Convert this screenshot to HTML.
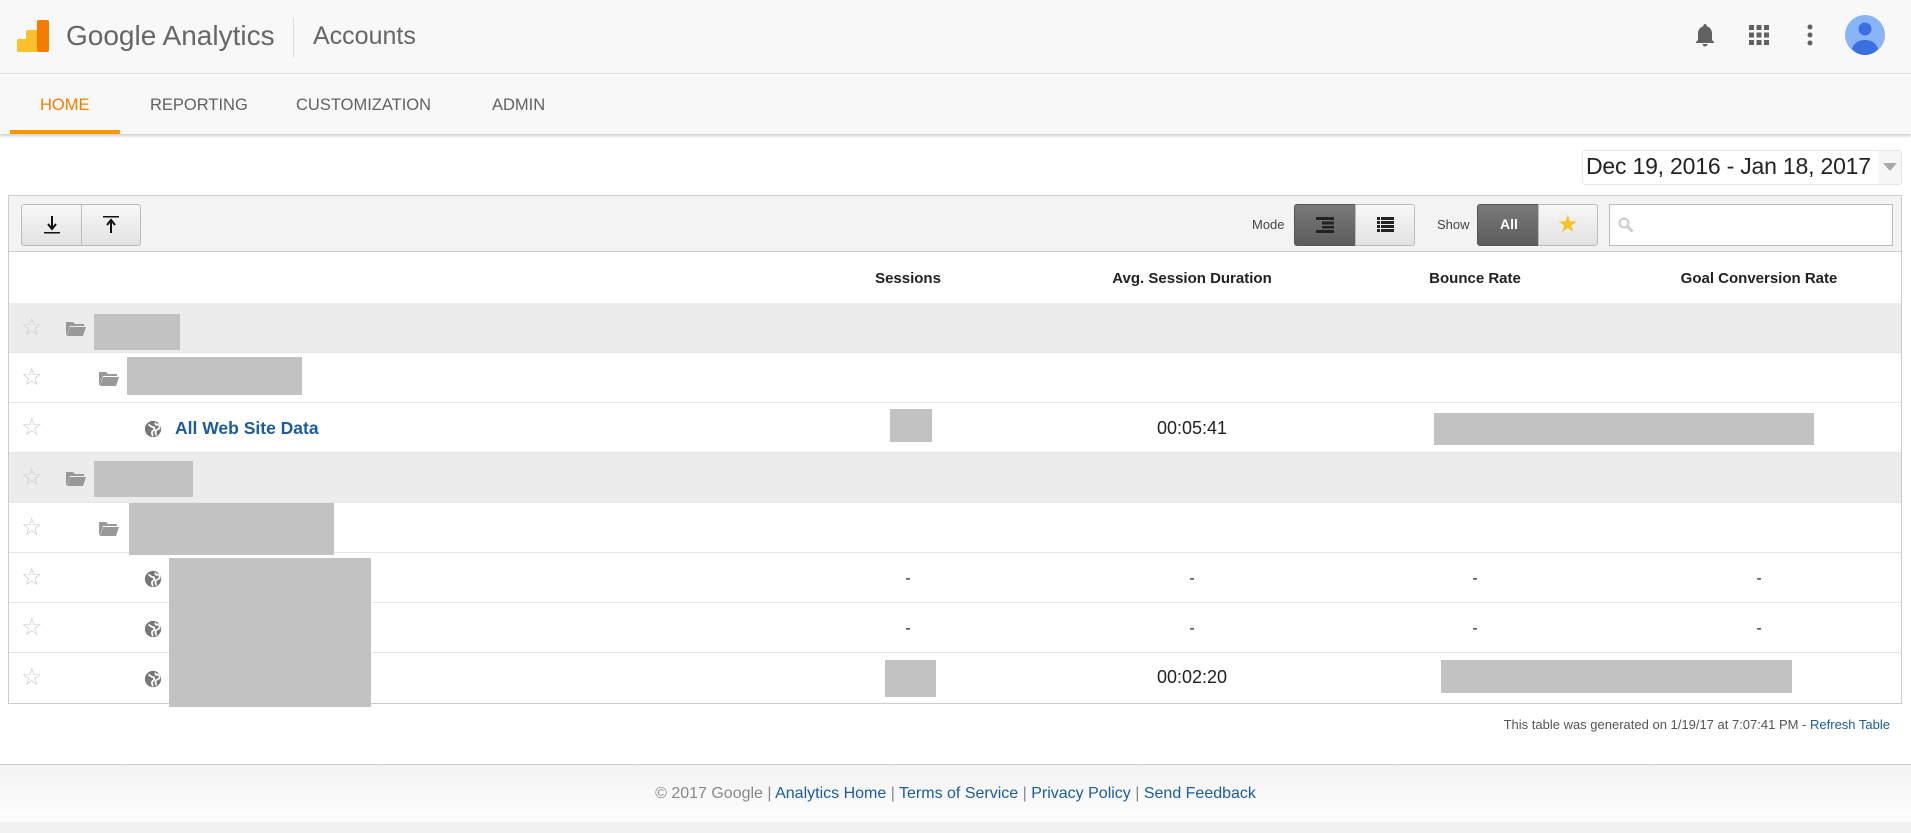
<!DOCTYPE html>
<html><head><meta charset="utf-8"><style>
*{margin:0;padding:0;box-sizing:border-box}
body{width:1911px;height:833px;overflow:hidden;background:#fff;font-family:"Liberation Sans",Arial,sans-serif;position:relative;color:#222}
.a{position:absolute}
.hdr{left:0;top:0;width:1911px;height:74px;background:#f8f8f8;border-bottom:1px solid #e0e0e0}
.nav{left:0;top:75px;width:1911px;height:59px;background:#f8f8f8;box-shadow:0 2px 3px rgba(0,0,0,.2)}
.nav span{position:absolute;top:21px;font-size:16.5px;color:#616161}
.tbl{left:8px;top:195px;width:1894px;height:509px;border:1px solid #ccc;border-top:1px solid #ccc}
.tb{left:9px;top:196px;width:1892px;height:56px;background:#f3f3f3;border-bottom:1px solid #ccc}
.btn{position:absolute;top:8px;height:42px;border:1px solid #bbb;background:linear-gradient(#f7f7f7,#e2e2e2)}
.row{position:absolute;left:9px;width:1892px;height:50px;border-bottom:1px solid #e6e6e6}
.g{background:#ececec}
.blk{position:absolute;background:#c2c2c2}
.th{position:absolute;top:270px;font-size:15px;font-weight:bold;transform:translateX(-50%);color:#222;white-space:nowrap}
.c{position:absolute;transform:translateX(-50%);font-size:18px}
.st{position:absolute;left:12px;top:13px;font-size:24px;color:#ccc;line-height:1}
</style></head><body>
<div class="a hdr"></div>
<svg class="a" style="left:17px;top:20px" width="33" height="32" viewBox="0 0 33 32"><rect x="0" y="19" width="12" height="13" rx="2" fill="#fbc02d"/><rect x="9" y="10" width="12" height="22" rx="2" fill="#fbc02d"/><rect x="20" y="0" width="12" height="32" rx="2" fill="#f57c00"/></svg>
<div class="a" style="left:66px;top:20px;font-size:28px;color:#666">Google Analytics</div>
<div class="a" style="left:293px;top:18px;width:1px;height:40px;background:#ddd"></div>
<div class="a" style="left:313px;top:22px;font-size:25px;color:#666">Accounts</div>
<svg class="a" style="left:1694px;top:22px" width="22" height="26" viewBox="0 0 22 26"><path d="M11 2c-1 0-1.6.7-1.6 1.5v.8C6 5.1 4 8 4 11.5V18l-2 2v1h18v-1l-2-2v-6.5C18 8 16 5.1 12.6 4.3v-.8C12.6 2.7 12 2 11 2zM8.5 22a2.5 2.5 0 005 0z" fill="#616161"/></svg>
<svg class="a" style="left:1749px;top:25px" width="20" height="20" viewBox="0 0 20 20" fill="#616161"><rect x="0" y="0" width="5" height="5"/><rect x="7.5" y="0" width="5" height="5"/><rect x="15" y="0" width="5" height="5"/><rect x="0" y="7.5" width="5" height="5"/><rect x="7.5" y="7.5" width="5" height="5"/><rect x="15" y="7.5" width="5" height="5"/><rect x="0" y="15" width="5" height="5"/><rect x="7.5" y="15" width="5" height="5"/><rect x="15" y="15" width="5" height="5"/></svg>
<svg class="a" style="left:1806px;top:24px" width="8" height="22" viewBox="0 0 8 22" fill="#616161"><circle cx="4" cy="3" r="2.5"/><circle cx="4" cy="11" r="2.5"/><circle cx="4" cy="19" r="2.5"/></svg>
<svg class="a" style="left:1845px;top:15px" width="40" height="40" viewBox="0 0 40 40"><circle cx="20" cy="20" r="20" fill="#8ab4f8"/><circle cx="20" cy="14" r="6.5" fill="#3c6fde"/><path d="M7 34c2-7 8-9 13-9s11 2 13 9c-3.5 4-8 6-13 6s-9.5-2-13-6z" fill="#3c6fde"/></svg>
<div class="a nav"><span style="left:40px;color:#f57c00">HOME</span><span style="left:150px">REPORTING</span><span style="left:296px">CUSTOMIZATION</span><span style="left:492px">ADMIN</span>
<div class="a" style="left:10px;top:55px;width:110px;height:4px;background:#ff9800"></div></div>
<div class="a" style="left:1582px;top:150px;width:320px;height:35px;border:1px solid #e6e6e6;border-radius:3px;background:#fff"></div>
<div class="a" style="left:1586px;top:153px;font-size:23px;color:#222;letter-spacing:-.2px">Dec 19, 2016 - Jan 18, 2017</div>
<div class="a" style="left:1878px;top:151px;width:23px;height:33px;background:#f6f6f6"></div>
<div class="a" style="left:1883px;top:163px;border-left:7px solid transparent;border-right:7px solid transparent;border-top:8px solid #aaa"></div>
<div class="a tbl"></div>
<div class="a tb">
<div class="btn" style="left:12px;width:61px;border-radius:3px 0 0 3px"></div>
<div class="btn" style="left:72px;width:60px;border-radius:0 3px 3px 0"></div>
<svg class="a" style="left:33px;top:20px" width="20" height="18" viewBox="0 0 20 18"><path d="M10 0v12M6 8l4 5 4-5" stroke="#111" stroke-width="2" fill="none"/><rect x="2" y="16" width="16" height="1.5" fill="#111"/></svg>
<svg class="a" style="left:92px;top:20px" width="20" height="18" viewBox="0 0 20 18"><rect x="2" y="0" width="16" height="1.5" fill="#111"/><path d="M10 17V5M6 9l4-5 4 5" stroke="#111" stroke-width="2" fill="none"/></svg>
<div class="a" style="left:1243px;top:21px;font-size:13px;color:#444">Mode</div>
<div class="btn" style="left:1285px;width:62px;background:linear-gradient(#7a7a7a,#5c5c5c);border-color:#555;border-radius:3px 0 0 3px"></div>
<div class="btn" style="left:1346px;width:60px;border-radius:0 3px 3px 0"></div>
<svg class="a" style="left:1307px;top:21px" width="18" height="16" viewBox="0 0 18 16" fill="#222"><rect x="0" y="0" width="18" height="3"/><rect x="6" y="4.5" width="12" height="3"/><rect x="6" y="9" width="12" height="2.5"/><rect x="0" y="13" width="18" height="3"/></svg>
<svg class="a" style="left:1368px;top:21px" width="17" height="15" viewBox="0 0 17 15" fill="#222"><rect x="0" y="0" width="3" height="3"/><rect x="4" y="0" width="13" height="3"/><rect x="0" y="4" width="3" height="3"/><rect x="4" y="4" width="13" height="3"/><rect x="0" y="8" width="3" height="3"/><rect x="4" y="8" width="13" height="3"/><rect x="0" y="12" width="3" height="3"/><rect x="4" y="12" width="13" height="3"/></svg>
<div class="a" style="left:1428px;top:21px;font-size:13px;color:#444">Show</div>
<div class="btn" style="left:1468px;width:62px;background:linear-gradient(#7a7a7a,#5c5c5c);border-color:#555;border-radius:3px 0 0 3px"></div>
<div class="btn" style="left:1529px;width:60px;border-radius:0 3px 3px 0"></div>
<div class="a" style="left:1491px;top:20px;font-size:14px;font-weight:bold;color:#fff">All</div>
<div class="a" style="left:1548px;top:14px;font-size:24px;color:#f7c325">★</div>
<div class="a" style="left:1600px;top:8px;width:284px;height:42px;border:1px solid #bbb;background:#fff"></div>
<svg class="a" style="left:1609px;top:21px" width="16" height="16" viewBox="0 0 16 16"><circle cx="6" cy="6" r="4.5" stroke="#ccc" stroke-width="2" fill="none"/><path d="M9.5 9.5l5 5" stroke="#ccc" stroke-width="3"/></svg>
</div>
<div class="th" style="left:908px">Sessions</div>
<div class="th" style="left:1192px">Avg. Session Duration</div>
<div class="th" style="left:1475px">Bounce Rate</div>
<div class="th" style="left:1759px">Goal Conversion Rate</div>
<div class="row g" style="top:303px"><span class="st">☆</span></div>
<div class="row" style="top:353px"><span class="st">☆</span></div>
<div class="row" style="top:403px"><span class="st">☆</span></div>
<div class="row g" style="top:453px"><span class="st">☆</span></div>
<div class="row" style="top:503px"><span class="st">☆</span></div>
<div class="row" style="top:553px"><span class="st">☆</span></div>
<div class="row" style="top:603px"><span class="st">☆</span></div>
<div class="row" style="top:653px;border-bottom:none"><span class="st">☆</span></div>
<svg width="0" height="0" style="position:absolute"><defs><symbol id="f" viewBox="0 0 20 16"><path d="M0 2h7l2 2h9v2H4L1 15H0z M4 7h16l-3 9H1z" fill="#999"/></symbol><symbol id="w" viewBox="0 0 20 20"><circle cx="10" cy="10" r="9" fill="#777"/><path d="M5 5c2 1 3 3 5 3s2 3 0 4-1 4 0 6M13 3c-1 2 1 3 2 2s3 2 2 4-3 1-4 3 1 4 0 5" stroke="#fff" stroke-width="2" fill="none"/></symbol></defs></svg>
<svg class="a" style="left:66px;top:320px" width="20" height="16"><use href="#f"/></svg>
<svg class="a" style="left:99px;top:370px" width="20" height="16"><use href="#f"/></svg>
<svg class="a" style="left:66px;top:470px" width="20" height="16"><use href="#f"/></svg>
<svg class="a" style="left:99px;top:520px" width="20" height="16"><use href="#f"/></svg>
<svg class="a" style="left:144px;top:420px" width="18" height="18"><use href="#w"/></svg>
<svg class="a" style="left:144px;top:570px" width="18" height="18"><use href="#w"/></svg>
<svg class="a" style="left:144px;top:620px" width="18" height="18"><use href="#w"/></svg>
<svg class="a" style="left:144px;top:670px" width="18" height="18"><use href="#w"/></svg>
<div class="blk" style="left:94px;top:314px;width:86px;height:36px"></div>
<div class="blk" style="left:127px;top:357px;width:175px;height:38px"></div>
<div class="a" style="left:175px;top:418px;font-size:17.5px;font-weight:bold;color:#1a5c9e">All Web Site Data</div>
<div class="blk" style="left:890px;top:409px;width:42px;height:33px"></div>
<div class="c" style="left:1192px;top:418px">00:05:41</div>
<div class="blk" style="left:1434px;top:413px;width:380px;height:32px"></div>
<div class="blk" style="left:94px;top:461px;width:99px;height:36px"></div>
<div class="blk" style="left:129px;top:503px;width:205px;height:52px"></div>
<div class="blk" style="left:169px;top:558px;width:202px;height:149px"></div>
<div class="c" style="left:908px;top:570px;font-size:16px">-</div><div class="c" style="left:1192px;top:570px;font-size:16px">-</div><div class="c" style="left:1475px;top:570px;font-size:16px">-</div><div class="c" style="left:1759px;top:570px;font-size:16px">-</div>
<div class="c" style="left:908px;top:620px;font-size:16px">-</div><div class="c" style="left:1192px;top:620px;font-size:16px">-</div><div class="c" style="left:1475px;top:620px;font-size:16px">-</div><div class="c" style="left:1759px;top:620px;font-size:16px">-</div>
<div class="blk" style="left:885px;top:660px;width:51px;height:37px"></div>
<div class="c" style="left:1192px;top:667px">00:02:20</div>
<div class="blk" style="left:1441px;top:660px;width:351px;height:33px"></div>
<div class="a" style="right:21px;top:717px;font-size:13px;color:#555">This table was generated on 1/19/17 at 7:07:41 PM - <span style="color:#1a5c9e">Refresh Table</span></div>
<div class="a" style="left:0;top:764px;width:1911px;height:58px;border-top:1px solid #ccc;background:linear-gradient(#f3f3f3,#fdfdfd)"></div>
<div class="a" style="left:0;top:822px;width:1911px;height:11px;background:#f1f1f1"></div>
<div class="a" style="left:0;top:785px;width:1911px;text-align:center;font-size:16px;color:#888">© 2017 Google | <span style="color:#1a5c9e">Analytics Home</span> | <span style="color:#1a5c9e">Terms of Service</span> | <span style="color:#1a5c9e">Privacy Policy</span> | <span style="color:#1a5c9e">Send Feedback</span></div>
</body></html>
